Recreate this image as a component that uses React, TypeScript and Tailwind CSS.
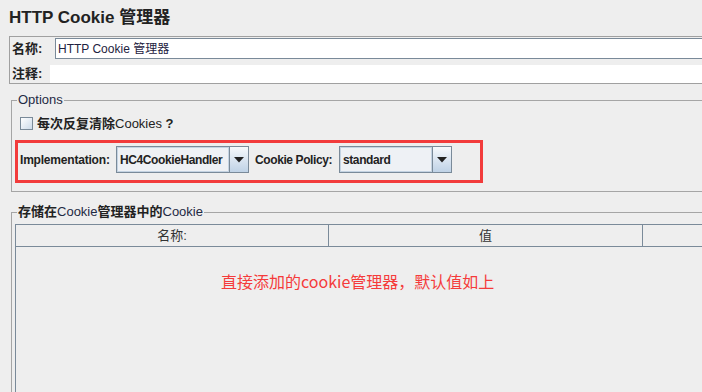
import React from 'react';

const ui = "font-['Liberation_Sans','Noto_Sans_CJK_SC',sans-serif]";

function Caret() {
  return (
    <svg width="10" height="6" viewBox="0 0 10 6" className="block">
      <path d="M0 0 L10 0 L5 5.5 Z" fill="#222" />
    </svg>
  );
}

function Combo({ value, width }: { value: string; width: string }) {
  return (
    <div className={`flex h-[27px] ${width} border border-[#7a8a99] bg-[#eef1f5]`}>
      <div className="flex min-w-0 flex-1 items-center border border-[#c4d3e2] pl-[2px] text-[12px] font-bold tracking-[-0.4px] text-[#222]">
        {value}
      </div>
      <div className="flex w-[19px] items-center justify-center border-l border-[#7a8a99] bg-gradient-to-b from-[#f6f9fc] to-[#bfd2e6]">
        <Caret />
      </div>
    </div>
  );
}

export default function App() {
  return (
    <div className={`relative h-[392px] w-[702px] overflow-hidden bg-[#eeeeee] text-[#222] ${ui}`}>
      {/* Title */}
      <div className="h-[36px] pl-[9px] pt-[8px] text-[17px] font-bold leading-[20px] text-[#222]">
        HTTP Cookie 管理器
      </div>

      {/* Name / comment */}
      <div className="ml-[9px] w-[702px] border border-[#a0a0a0] pt-[1px]">
        <div className="flex h-[21px]">
          <div className="w-[45px] pl-[2px] text-[13px] font-bold leading-[21px]">名称:</div>
          <div className="flex flex-1 items-center border border-[#7a8a99] bg-white pl-[2px] text-[12px] text-[#1e2240]">
            HTTP Cookie 管理器
          </div>
        </div>
        <div className="mt-[6px] flex h-[18px]">
          <div className="w-[40px] pl-[2px] text-[13px] font-bold leading-[18px]">注释:</div>
          <div className="flex-1 bg-white" />
        </div>
      </div>

      {/* Options */}
      <fieldset className="ml-[11px] mt-[8px] w-[700px] border border-[#a5a5a5] pb-[8px]">
        <legend className="ml-[5px] px-[1px] text-[13px] leading-[16px] text-[#1f2a44]">Options</legend>
        <div className="ml-[8px] mt-[7px] flex h-[17px] items-center gap-[4px]">
          <div className="h-[13px] w-[13px] border border-[#7a8a99] bg-gradient-to-br from-white to-[#cddbea]" />
          <span className="text-[13px] leading-[17px]">
            <span className="font-bold">每次反复清除</span>
            <span>Cookies </span>
            <span className="font-bold">?</span>
          </span>
        </div>
        <div className="ml-[3px] mt-[8px] flex h-[43px] w-[468px] items-start border-[3px] border-[#f23b3b] pt-[3px]">
          <div className="flex h-[27px] w-[98px] items-center pl-[2px] text-[12px] font-bold tracking-[-0.2px] text-[#222]">
            Implementation:
          </div>
          <Combo value="HC4CookieHandler" width="w-[133px]" />
          <div className="ml-[6px] flex h-[27px] w-[84px] items-center text-[12px] font-bold tracking-[-0.4px] text-[#222]">
            Cookie Policy:
          </div>
          <Combo value="standard" width="w-[113px]" />
        </div>
      </fieldset>

      {/* Stored cookies */}
      <fieldset className="ml-[11px] mt-[12px] w-[700px] border border-[#a5a5a5]">
        <legend className="ml-[5px] px-[1px] text-[13px] leading-[16px]">
          <span className="font-bold">存储在</span>
          <span className="text-[#1f2a44]">Cookie</span>
          <span className="font-bold">管理器中的</span>
          <span className="text-[#1f2a44]">Cookie</span>
        </legend>
        <div className="ml-[3px] mt-[4px] h-[200px] border border-[#7a8a99]">
          <div className="flex h-[22px] border-b border-[#7a8a99] text-[13px] leading-[21px] text-[#333]">
            <div className="w-[313px] border-r border-[#7a8a99] text-center">名称:</div>
            <div className="w-[314px] border-r border-[#7a8a99] text-center">值</div>
            <div className="flex-1" />
          </div>
          <div className="pl-[205px] pt-[23px] font-['Noto_Sans_CJK_SC',sans-serif] text-[16px] leading-[22px] text-[#f53b3b]">
            直接添加的cookie管理器，默认值如上
          </div>
        </div>
      </fieldset>
    </div>
  );
}
